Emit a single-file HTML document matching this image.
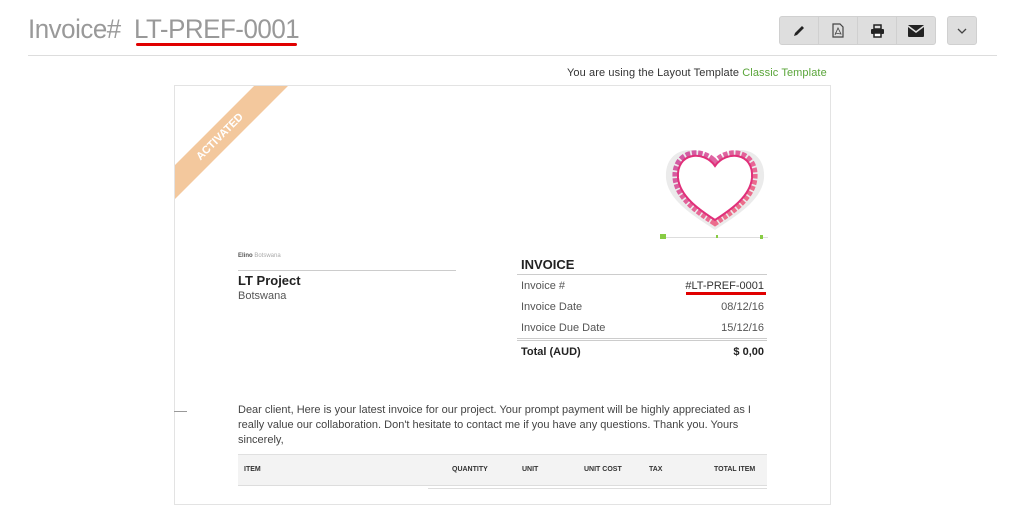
<!DOCTYPE html>
<html><head><meta charset="utf-8"><style>
*{margin:0;padding:0;box-sizing:border-box}
body{width:1024px;height:493px;overflow:hidden;background:#fff;font-family:"Liberation Sans",sans-serif;position:relative;color:#333}
.a{position:absolute;white-space:nowrap}
.btn{position:absolute;top:16px;height:29px;background:#dedede;border:1px solid #d0d0d0;display:flex;align-items:center;justify-content:center}
.t7{font-size:7px;font-weight:bold;color:#333}
</style></head><body>
<div class="a" style="left:28px;top:14px;font-size:27px;color:#999;letter-spacing:-0.5px;transform:scaleX(0.96);transform-origin:left">Invoice#&nbsp;</div>
<div class="a" style="left:134px;top:14px;font-size:27px;color:#999;letter-spacing:-0.5px;transform:scaleX(0.96);transform-origin:left">LT-PREF-0001</div>
<div class="a" style="left:136px;top:43px;width:161px;height:3px;background:#e00000;border-radius:2px"></div>
<div class="a" style="left:28px;top:55px;width:969px;height:1px;background:#ddd"></div>
<div class="btn" style="left:779px;width:40px;border-radius:3px 0 0 3px">
<svg width="14" height="14" viewBox="0 0 14 14"><path d="M2 12 L3 9 L10 2 L12 4 L5 11 Z" fill="#222"/></svg></div>
<div class="btn" style="left:818px;width:40px">
<svg width="12" height="15" viewBox="0 0 12 15"><path d="M1 1 H8 L11 4 V14 H1 Z" fill="none" stroke="#444" stroke-width="1.2"/><path d="M3 12 L6 5 L9 11 L3 10" fill="none" stroke="#444" stroke-width="0.8"/></svg></div>
<div class="btn" style="left:857px;width:40px">
<svg width="15" height="14" viewBox="0 0 15 14"><rect x="4" y="1" width="7" height="4" fill="none" stroke="#222" stroke-width="1.5"/><rect x="1" y="5" width="13" height="5" rx="1" fill="#222"/><rect x="4" y="9" width="7" height="4" fill="#fff" stroke="#222" stroke-width="1.5"/></svg></div>
<div class="btn" style="left:896px;width:40px;border-radius:0 3px 3px 0">
<svg width="16" height="12" viewBox="0 0 16 12"><rect x="0" y="0" width="16" height="12" rx="1" fill="#222"/><path d="M0 1 L8 7 L16 1" fill="none" stroke="#dedede" stroke-width="1.5"/></svg></div>
<div class="btn" style="left:947px;width:30px;border-radius:3px">
<svg width="10" height="6" viewBox="0 0 10 6"><path d="M1 1 L5 5 L9 1" fill="none" stroke="#444" stroke-width="1.3"/></svg></div>
<div class="a" style="left:567px;top:67px;font-size:11px;color:#333;letter-spacing:0.1px">You are using the Layout Template <span style="color:#5aa53a">Classic Template</span></div>
<div class="a" style="left:174px;top:85px;width:657px;height:420px;border:1px solid #e3e3e3;overflow:hidden">
 <div class="a" style="left:-55px;top:39px;width:200px;height:24px;background:#f3c89d;transform:rotate(-45deg);color:#fff;font-size:11px;font-weight:bold;text-align:center;line-height:24px">ACTIVATED</div>
</div>
<svg class="a" style="left:658px;top:138px" width="114" height="108" viewBox="0 0 114 108">
<defs><linearGradient id="g" x1="0" y1="0" x2="1" y2="1"><stop offset="0" stop-color="#c8288c"/><stop offset="0.6" stop-color="#e83a78"/><stop offset="1" stop-color="#f05060"/></linearGradient></defs>
<path d="M57 26 C45 5 6 6 8 40 C10 64 40 80 57 92 C74 80 104 64 106 40 C108 6 69 5 57 26 Z" fill="#e6e6e6" opacity="0.8"/>
<path d="M57 28 C46 12 18 14 20 40 C22 60 45 74 57 82 C69 74 92 60 94 40 C96 14 68 12 57 28 Z" fill="#fff" stroke="url(#g)" stroke-width="11" stroke-dasharray="4 1.5" opacity="0.75"/>
<path d="M57 28 C46 12 18 14 20 40 C22 60 45 74 57 82 C69 74 92 60 94 40 C96 14 68 12 57 28 Z" fill="#fff" stroke="#e0307a" stroke-width="2"/>
<rect x="2" y="99" width="108" height="1" fill="#ddd"/><rect x="2" y="96" width="6" height="5" fill="#8c4"/><rect x="58" y="97" width="2" height="3" fill="#8c4"/><rect x="102" y="97" width="3" height="4" fill="#8c4"/>
</svg>
<div class="a" style="left:238px;top:253px;font-size:6px;color:#555;font-weight:bold">Elino <span style="color:#aaa;font-weight:normal">Botswana</span></div>
<div class="a" style="left:238px;top:270px;width:218px;height:1px;background:#ccc"></div>
<div class="a" style="left:238px;top:273px;font-size:13px;font-weight:bold;color:#222">LT Project</div>
<div class="a" style="left:238px;top:290px;font-size:11px;color:#555">Botswana</div>
<div class="a" style="left:521px;top:257px;font-size:13px;font-weight:bold;color:#222">INVOICE</div>
<div class="a" style="left:517px;top:274px;width:250px;height:1px;background:#ccc"></div>
<div class="a" style="left:521px;top:280px;font-size:11px;color:#555">Invoice #</div>
<div class="a" style="left:664px;top:280px;width:100px;text-align:right;font-size:11px;color:#333">#LT-PREF-0001</div>
<div class="a" style="left:686px;top:292px;width:80px;height:3px;background:#e00000"></div>
<div class="a" style="left:521px;top:301px;font-size:11px;color:#555">Invoice Date</div>
<div class="a" style="left:664px;top:301px;width:100px;text-align:right;font-size:11px;color:#555">08/12/16</div>
<div class="a" style="left:521px;top:322px;font-size:11px;color:#555">Invoice Due Date</div>
<div class="a" style="left:664px;top:322px;width:100px;text-align:right;font-size:11px;color:#555">15/12/16</div>
<div class="a" style="left:517px;top:338px;width:250px;height:3px;border-top:1px solid #ccc;border-bottom:1px solid #ccc"></div>
<div class="a" style="left:521px;top:346px;font-size:11px;font-weight:bold;color:#222">Total (AUD)</div>
<div class="a" style="left:664px;top:346px;width:100px;text-align:right;font-size:11px;font-weight:bold;color:#222">$ 0,00</div>
<div class="a" style="left:174px;top:411px;width:13px;height:1px;background:#999"></div>
<div class="a" style="left:238px;top:403px;width:530px;white-space:normal;font-size:11px;line-height:15px;color:#444">Dear client, Here is your latest invoice for our project. Your prompt payment will be highly appreciated as I really value our collaboration. Don't hesitate to contact me if you have any questions. Thank you. Yours sincerely,</div>
<div class="a" style="left:238px;top:454px;width:529px;height:32px;background:#f3f3f3;border-top:1px solid #e0e0e0;border-bottom:1px solid #ddd"></div>
<div class="a t7" style="left:244px;top:466px">ITEM</div>
<div class="a t7" style="left:452px;top:466px">QUANTITY</div>
<div class="a t7" style="left:522px;top:466px">UNIT</div>
<div class="a t7" style="left:584px;top:466px">UNIT COST</div>
<div class="a t7" style="left:649px;top:466px">TAX</div>
<div class="a t7" style="left:714px;top:466px">TOTAL ITEM</div>
<div class="a" style="left:428px;top:488px;width:339px;height:1px;background:#ddd"></div>
</body></html>
